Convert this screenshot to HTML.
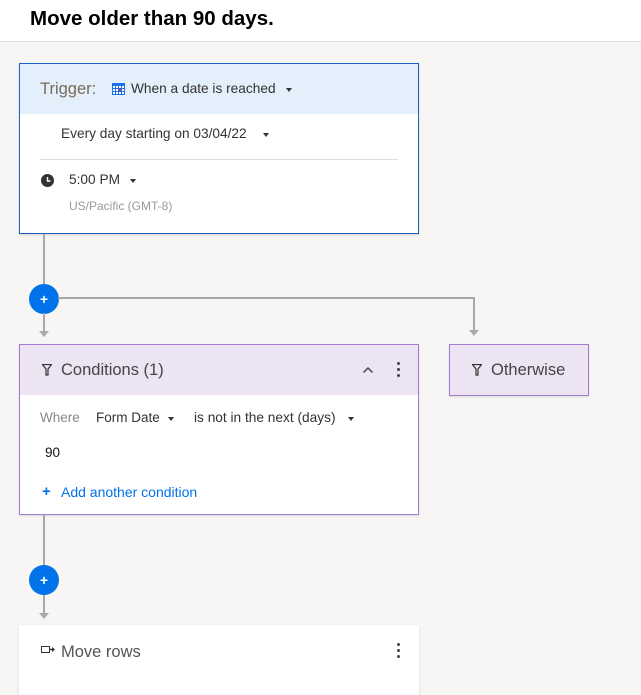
<!DOCTYPE html>
<html><head><meta charset="utf-8"><style>
*{margin:0;padding:0;box-sizing:border-box}
body{width:641px;height:686px;overflow:hidden;background:#f7f6f5;font-family:"Liberation Sans",sans-serif;position:relative;color:#333}
.a{position:absolute;white-space:nowrap}
.hdr{position:absolute;left:0;top:0;width:641px;height:42px;background:#fff;border-bottom:1px solid #dedede}
.card{position:absolute;background:#fff}
.caret{position:absolute;width:0;height:0;border-left:3px solid transparent;border-right:3px solid transparent;border-top:4px solid #333}
.line{position:absolute;background:#a9a9a9}
.arrow{position:absolute;width:0;height:0;border-left:5px solid transparent;border-right:5px solid transparent;border-top:6px solid #a9a9a9}
.plus{position:absolute;width:30px;height:30px;border-radius:50%;background:#0073ea;color:#fff;font-weight:bold;font-size:14px;line-height:30px;text-align:center}
.dots{position:absolute;width:3px}
.dots i{display:block;width:3px;height:3px;border-radius:50%;background:#444;margin-bottom:3px}
</style></head><body>
<div class="hdr"></div>
<div class="a" style="left:30px;top:7px;font-size:20.5px;font-weight:bold;color:#000">Move older than 90 days.</div>

<div class="card" style="left:19px;top:63px;width:400px;height:171px;border:1px solid #1a62c4;box-shadow:0 1px 2px rgba(0,0,0,.15)">
  <div style="height:50px;background:#e3effb"></div>
</div>
<div class="a" style="left:40px;top:80px;font-size:16.5px;color:#7a6b58">Trigger:</div>
<svg class="a" style="left:112px;top:83px" width="13" height="12" viewBox="0 0 13 12"><rect width="13" height="12" fill="#1a73e8"/><g fill="#fff"><rect x="1" y="3" width="2" height="2"/><rect x="4" y="3" width="2" height="2"/><rect x="7" y="3" width="2" height="2"/><rect x="10" y="3" width="2" height="2"/><rect x="1" y="6" width="2" height="2"/><rect x="4" y="6" width="2" height="2"/><rect x="10" y="6" width="2" height="2"/><rect x="1" y="9" width="2" height="2"/><rect x="4" y="9" width="2" height="2"/><rect x="7" y="9" width="2" height="2"/><rect x="10" y="9" width="2" height="2"/></g><rect x="7" y="6" width="2" height="2" fill="#e0245e"/></svg>
<div class="a" style="left:131px;top:81px;font-size:13.7px">When a date is reached</div>
<div class="caret" style="left:286px;top:88px"></div>
<div class="a" style="left:61px;top:126px;font-size:13.7px">Every day starting on 03/04/22</div>
<div class="caret" style="left:263px;top:133px"></div>
<div class="a" style="left:40px;top:159px;width:358px;height:1px;background:#ddd"></div>
<svg class="a" style="left:41px;top:174px" width="13" height="13" viewBox="0 0 13 13"><circle cx="6.5" cy="6.5" r="6.5" fill="#333"/><path d="M6.5 3v4h3" stroke="#fff" stroke-width="1.4" fill="none"/></svg>
<div class="a" style="left:69px;top:172px;font-size:13.7px">5:00 PM</div>
<div class="caret" style="left:130px;top:179px"></div>
<div class="a" style="left:69px;top:199px;font-size:12px;color:#999">US/Pacific (GMT-8)</div>

<div class="line" style="left:43px;top:234px;width:2px;height:52px"></div>
<div class="plus" style="left:29px;top:284px">+</div>
<div class="line" style="left:58px;top:297px;width:416px;height:2px"></div>
<div class="line" style="left:473px;top:297px;width:2px;height:33px"></div>
<div class="arrow" style="left:469px;top:330px"></div>
<div class="line" style="left:43px;top:313px;width:2px;height:18px"></div>
<div class="arrow" style="left:39px;top:331px"></div>

<div class="card" style="left:19px;top:344px;width:400px;height:171px;border:1px solid #a37bd3;box-shadow:0 1px 2px rgba(0,0,0,.12)">
  <div style="height:50px;background:#ede4f3"></div>
</div>
<svg class="a" style="left:42px;top:364px" width="10" height="12" viewBox="0 0 10 12"><path d="M0.5 0.5h9L6 5v6H4V5z" fill="none" stroke="#333" stroke-width="1.2"/></svg>
<div class="a" style="left:61px;top:361px;font-size:16.5px;color:#444">Conditions (1)</div>
<svg class="a" style="left:362px;top:366px" width="12" height="8" viewBox="0 0 12 8"><path d="M1.5 6.5L6 2l4.5 4.5" fill="none" stroke="#444" stroke-width="1.5"/></svg>
<div class="dots" style="left:397px;top:362px"><i></i><i></i><i></i></div>
<div class="card" style="left:449px;top:344px;width:140px;height:52px;border:1px solid #a37bd3;background:#ede4f3;box-shadow:0 1px 2px rgba(0,0,0,.12)"></div>
<svg class="a" style="left:472px;top:364px" width="10" height="12" viewBox="0 0 10 12"><path d="M0.5 0.5h9L6 5v6H4V5z" fill="none" stroke="#333" stroke-width="1.2"/></svg>
<div class="a" style="left:491px;top:361px;font-size:16.5px;color:#444">Otherwise</div>
<div class="a" style="left:40px;top:410px;font-size:13.5px;color:#888">Where</div>
<div class="a" style="left:96px;top:410px;font-size:13.5px">Form Date</div>
<div class="caret" style="left:168px;top:417px"></div>
<div class="a" style="left:194px;top:410px;font-size:13.7px">is not in the next (days)</div>
<div class="caret" style="left:348px;top:417px"></div>
<div class="a" style="left:45px;top:445px;font-size:13.5px;color:#111">90</div>
<div class="a" style="left:42px;top:483px;font-size:15px;color:#0073ea;font-weight:bold">+</div>
<div class="a" style="left:61px;top:484px;font-size:14px;color:#0073ea">Add another condition</div>

<div class="line" style="left:43px;top:515px;width:2px;height:52px"></div>
<div class="plus" style="left:29px;top:565px">+</div>
<div class="line" style="left:43px;top:595px;width:2px;height:18px"></div>
<div class="arrow" style="left:39px;top:613px"></div>

<div class="card" style="left:19px;top:625px;width:400px;height:70px;border-radius:2px;box-shadow:0 1px 3px rgba(0,0,0,.12)"></div>
<svg class="a" style="left:41px;top:645px" width="15" height="9" viewBox="0 0 15 9"><path d="M0.5 1.5h8v6h-8z" fill="none" stroke="#333" stroke-width="1"/><path d="M8 4.5h4" stroke="#333" stroke-width="1.5"/><path d="M11 2l3 2.5-3 2.5z" fill="#333"/></svg>
<div class="a" style="left:61px;top:643px;font-size:16.5px;color:#555">Move rows</div>
<div class="dots" style="left:397px;top:643px"><i></i><i></i><i></i></div>
</body></html>
